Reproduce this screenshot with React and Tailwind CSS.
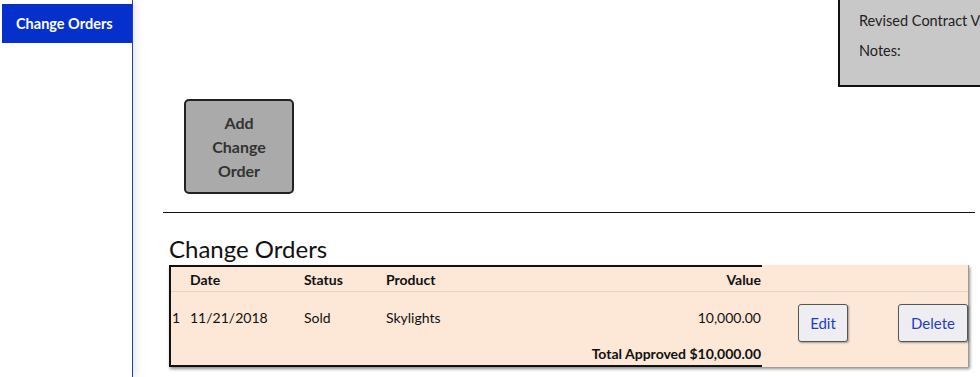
export default function App() {
  return (
    <div className="flex min-h-screen bg-white font-['Lato','Liberation_Sans',sans-serif] text-[#111]">
      {/* sidebar */}
      <div className="w-[133px] shrink-0 border-r border-[#1a3ad6] pt-1 pl-[2px] shadow-[3px_0_8px_rgba(0,0,0,0.10)] z-10">
        <div className="flex h-[39px] items-center bg-[#0630cc] pl-[14px] text-[14.5px] font-bold text-white">
          Change Orders
        </div>
      </div>

      {/* main */}
      <div className="flex-1 min-w-0 overflow-hidden pl-[30px]">
        <div className="flex justify-end">
          <div className="h-[87px] w-[142px] shrink-0 overflow-hidden whitespace-nowrap border-b-2 border-l-2 border-[#111] bg-[#c8c8c8] pl-[19px] pt-[12px] text-[14.5px] text-[#222]">
            <div className="leading-[18px]">Revised Contract Value</div>
            <div className="mt-[12px] leading-[18px]">Notes:</div>
          </div>
        </div>

        <button className="ml-[21px] mt-[12px] flex h-[95px] w-[110px] flex-col items-center justify-center rounded-[5px] border-2 border-[#222] bg-[#aaaaaa] text-[16px] font-bold leading-[24px] text-[#333]">
          <span>Add</span>
          <span>Change</span>
          <span>Order</span>
        </button>

        <div className="mt-[18px] mr-[5px] h-px bg-[#111]" />

        <h2 className="ml-[6px] mt-[20px] text-[24px] leading-[32px] font-normal text-[#111]">Change Orders</h2>

        <div className="ml-[6px] flex w-[800px] bg-[#fde8d7] shadow-[1px_2px_3px_rgba(0,0,0,0.45)]">
          <div className="w-[593px] shrink-0 border-y-2 border-l-2 border-[#111] text-[14px]">
            <div className="grid h-[25px] grid-cols-[19px_114px_82px_1fr] items-center border-b border-[#e6d2c2] font-bold">
              <div />
              <div>Date</div>
              <div>Status</div>
              <div className="flex justify-between">
                <span>Product</span>
                <span className="pr-px">Value</span>
              </div>
            </div>
            <div className="grid h-[50px] grid-cols-[19px_114px_82px_1fr] items-center">
              <div className="pl-px">1</div>
              <div>11/21/2018</div>
              <div>Sold</div>
              <div className="flex justify-between">
                <span>Skylights</span>
                <span className="pr-px">10,000.00</span>
              </div>
            </div>
            <div className="flex h-[23px] items-center justify-end pr-px font-bold">
              Total Approved $10,000.00
            </div>
          </div>

          <div className="flex-1 border-r border-[#999]">
            <div className="h-[27px] border-b border-[#e6d2c2]" />
            <div className="flex pt-[12px] pl-[36px] text-[15px]">
              <button className="h-[38px] w-[50px] rounded-[3px] border border-[#555] bg-[#eeeef2] text-[#1f3cc8] shadow-[1px_1px_2px_rgba(0,0,0,0.35)]">
                Edit
              </button>
              <button className="ml-[50px] h-[38px] w-[70px] rounded-[3px] border border-[#555] bg-[#eeeef2] text-[#1f3cc8] shadow-[1px_1px_2px_rgba(0,0,0,0.35)]">
                Delete
              </button>
            </div>
          </div>
        </div>
      </div>
    </div>
  );
}
